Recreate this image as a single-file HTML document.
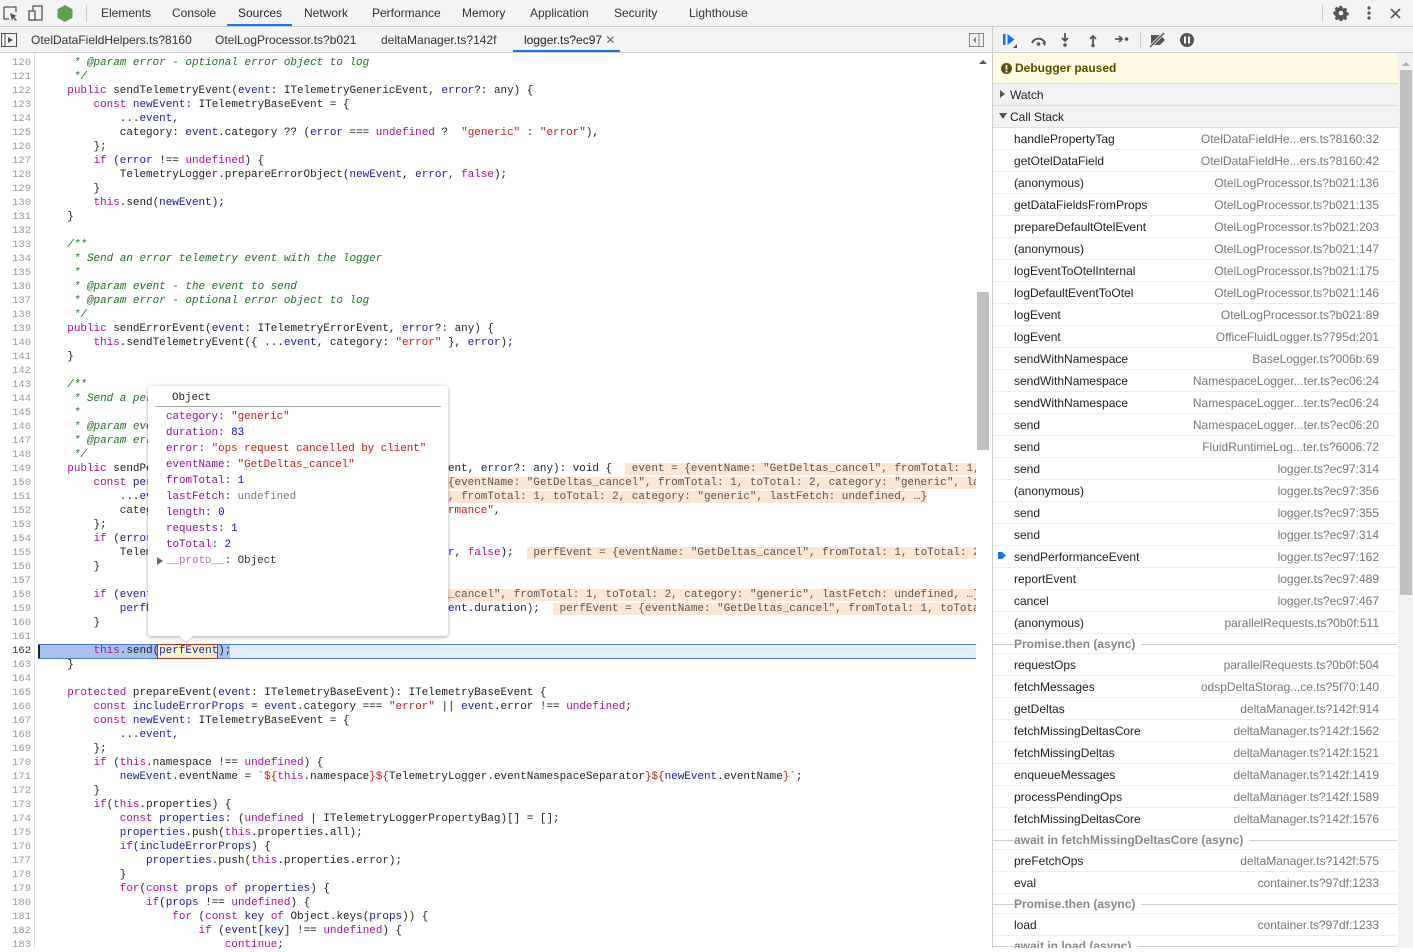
<!DOCTYPE html>
<html><head><meta charset="utf-8"><style>
*{box-sizing:border-box;margin:0;padding:0}
body{width:1413px;height:948px;overflow:hidden;background:#fff;font-family:"Liberation Sans",sans-serif;font-size:12px;color:#333;position:relative}
.abs{position:absolute}
#top{left:0;top:0;width:1413px;height:27px;background:#f3f3f3;border-bottom:1px solid #ccc}
.tab{position:absolute;top:6px;color:#333;font-size:12px}
#ftabs{left:0;top:27px;width:992px;height:26px;background:#f3f3f3;border-bottom:1px solid #ccc}
.ft{position:absolute;top:6px;font-size:12px;color:#333}
#gut{left:0;top:53px;width:35px;height:895px;background:#fff;border-right:1px solid #ddd}
.ln{position:absolute;left:0;width:31px;text-align:right;font-family:"Liberation Mono",monospace;font-size:10.5px;color:#999;line-height:14px}
.cl{position:absolute;left:41px;white-space:pre;font-family:"Liberation Mono",monospace;font-size:10.95px;line-height:14px;color:#222}
.k{color:#aa0d91}.s{color:#c41a16}.c{color:#236e25;font-style:italic}.v{color:#1a1aa6}.n{color:#1c00cf}.u{color:#777}
.iv{background:#fde6d2;color:#555}
#tip{left:148px;top:386px;width:300px;height:250px;background:#fff;border-radius:3px;box-shadow:0 1px 4px rgba(0,0,0,.35);font-family:"Liberation Mono",monospace;font-size:10.85px;line-height:16px}
.tp{position:absolute;left:18px;white-space:pre}
.pk{color:#881391}
#rp{left:992px;top:27px;width:421px;height:921px;background:#fff;border-left:1px solid #ccc}
.row{position:absolute;left:0;width:404px;height:22px;border-bottom:1px solid #eee;background:#fff}
.row .a{position:absolute;left:21px;top:4px;color:#222}
.row .b{position:absolute;right:18px;top:4px;color:#777}
.sep{position:absolute;left:0;width:404px;height:20px;background:#fff;border-bottom:1px solid #eee}
.sep span{position:absolute;left:21px;top:3px;color:#888;font-weight:bold;background:#fff;padding:0 6px 0 0}
.sep:before{content:"";position:absolute;left:0;right:0;top:10px;border-top:1px solid #ccc}
</style></head><body>
<div id="top" class="abs">
<svg class="abs" style="left:3px;top:6px" width="16" height="16"><path d="M1 1h12v5M1 1v12h5" fill="none" stroke="#555" stroke-width="1.3"/><path d="M7 7l7 3-3 1 3 3-1 1-3-3-1 3z" fill="#555"/></svg>
<svg class="abs" style="left:28px;top:5px" width="16" height="18"><rect x="5" y="1" width="9" height="14" fill="none" stroke="#555" stroke-width="1.3"/><rect x="1" y="6" width="6" height="9" fill="#f3f3f3" stroke="#555" stroke-width="1.3"/></svg>
<svg class="abs" style="left:57px;top:5px" width="16" height="17"><path d="M8 0l7.5 4.2v8.6L8 17 .5 12.8V4.2z" fill="#5fa04e"/></svg>
<div class="abs" style="left:86px;top:5px;width:1px;height:17px;background:#ccc"></div>
<span class="tab" style="left:101px">Elements</span>
<span class="tab" style="left:172px">Console</span>
<span class="tab" style="left:238px;color:#222">Sources</span>
<div class="abs" style="left:227px;top:24px;width:65px;height:2px;background:#1a73e8"></div>
<span class="tab" style="left:304px">Network</span>
<span class="tab" style="left:372px">Performance</span>
<span class="tab" style="left:462px">Memory</span>
<span class="tab" style="left:530px">Application</span>
<span class="tab" style="left:614px">Security</span>
<span class="tab" style="left:689px">Lighthouse</span>
<div class="abs" style="left:1322px;top:5px;width:1px;height:17px;background:#ccc"></div>
<svg class="abs" style="left:1333px;top:5px" width="16" height="16" viewBox="0 0 16 16"><path d="M8 1l1.3.2.4 1.8 1.2.6 1.6-1 1.8 1.8-1 1.6.6 1.2 1.8.4v2.6l-1.8.4-.6 1.2 1 1.6-1.8 1.8-1.6-1-1.2.6-.4 1.8H6.7l-.4-1.8-1.2-.6-1.6 1-1.8-1.8 1-1.6-.6-1.2L.3 9.3V6.7l1.8-.4.6-1.2-1-1.6 1.8-1.8 1.6 1 1.2-.6.4-1.8z" fill="#555"/><circle cx="8" cy="8" r="2.3" fill="#f3f3f3"/></svg>
<svg class="abs" style="left:1366px;top:5px" width="6" height="16"><circle cx="3" cy="3" r="1.6" fill="#555"/><circle cx="3" cy="8" r="1.6" fill="#555"/><circle cx="3" cy="13" r="1.6" fill="#555"/></svg>
<svg class="abs" style="left:1390px;top:8px" width="11" height="11"><path d="M1 1l9 9M10 1l-9 9" stroke="#555" stroke-width="1.6"/></svg>
</div>
<div id="ftabs" class="abs">
<svg class="abs" style="left:1px;top:6px" width="16" height="14"><rect x=".5" y=".5" width="15" height="13" fill="none" stroke="#555"/><path d="M4 1v12" stroke="#555"/><path d="M7 4l5 3-5 3z" fill="#555"/></svg>
<span class="ft" style="left:31px">OtelDataFieldHelpers.ts?8160</span>
<span class="ft" style="left:215px">OtelLogProcessor.ts?b021</span>
<span class="ft" style="left:381px">deltaManager.ts?142f</span>
<span class="ft" style="left:524px;color:#222">logger.ts?ec97 <span style="color:#666">✕</span></span>
<div class="abs" style="left:513px;top:23px;width:107px;height:2px;background:#1a73e8"></div>
<svg class="abs" style="left:969px;top:6px" width="15" height="14"><rect x=".5" y=".5" width="14" height="13" fill="none" stroke="#888"/><path d="M10 1v12" stroke="#888"/><path d="M7 4l-3 3 3 3z" fill="#888"/></svg>
</div>

<div id="gut" class="abs"></div>
<div class="abs" style="left:38px;top:644px;width:938px;height:15px;background:#e6edfc;border-top:1px solid #4e7ce6;border-bottom:1px solid #4e7ce6"></div>
<div class="abs" style="left:38px;top:645px;width:192px;height:13px;background:#a9c0f3"></div>
<div class="abs" style="left:38px;top:645px;width:2px;height:13px;background:#222"></div>
<div class="abs" style="left:157px;top:644px;width:61px;height:15px;background:#fdf6c8;border:1px solid #b03030"></div>

<div class="abs" style="left:0;top:56px">
<div class="ln" style="top:0">120</div><div class="ln" style="top:14px">121</div><div class="ln" style="top:28px">122</div><div class="ln" style="top:42px">123</div><div class="ln" style="top:56px">124</div><div class="ln" style="top:70px">125</div><div class="ln" style="top:84px">126</div><div class="ln" style="top:98px">127</div><div class="ln" style="top:112px">128</div><div class="ln" style="top:126px">129</div><div class="ln" style="top:140px">130</div><div class="ln" style="top:154px">131</div><div class="ln" style="top:168px">132</div><div class="ln" style="top:182px">133</div><div class="ln" style="top:196px">134</div><div class="ln" style="top:210px">135</div><div class="ln" style="top:224px">136</div><div class="ln" style="top:238px">137</div><div class="ln" style="top:252px">138</div><div class="ln" style="top:266px">139</div><div class="ln" style="top:280px">140</div><div class="ln" style="top:294px">141</div><div class="ln" style="top:308px">142</div><div class="ln" style="top:322px">143</div><div class="ln" style="top:336px">144</div><div class="ln" style="top:350px">145</div><div class="ln" style="top:364px">146</div><div class="ln" style="top:378px">147</div><div class="ln" style="top:392px">148</div><div class="ln" style="top:406px">149</div><div class="ln" style="top:420px">150</div><div class="ln" style="top:434px">151</div><div class="ln" style="top:448px">152</div><div class="ln" style="top:462px">153</div><div class="ln" style="top:476px">154</div><div class="ln" style="top:490px">155</div><div class="ln" style="top:504px">156</div><div class="ln" style="top:518px">157</div><div class="ln" style="top:532px">158</div><div class="ln" style="top:546px">159</div><div class="ln" style="top:560px">160</div><div class="ln" style="top:574px">161</div><div class="ln" style="top:588px;color:#333">162</div><div class="ln" style="top:602px">163</div><div class="ln" style="top:616px">164</div><div class="ln" style="top:630px">165</div><div class="ln" style="top:644px">166</div><div class="ln" style="top:658px">167</div><div class="ln" style="top:672px">168</div><div class="ln" style="top:686px">169</div><div class="ln" style="top:700px">170</div><div class="ln" style="top:714px">171</div><div class="ln" style="top:728px">172</div><div class="ln" style="top:742px">173</div><div class="ln" style="top:756px">174</div><div class="ln" style="top:770px">175</div><div class="ln" style="top:784px">176</div><div class="ln" style="top:798px">177</div><div class="ln" style="top:812px">178</div><div class="ln" style="top:826px">179</div><div class="ln" style="top:840px">180</div><div class="ln" style="top:854px">181</div><div class="ln" style="top:868px">182</div><div class="ln" style="top:882px">183</div>

<div class="cl" style="top:0"><span class="c">     * @param error - optional error object to log</span></div>
<div class="cl" style="top:14px"><span class="c">     */</span></div>
<div class="cl" style="top:28px">    <span class="k">public</span> sendTelemetryEvent(<span class="v">event</span>: ITelemetryGenericEvent, <span class="v">error</span>?: any) {</div>
<div class="cl" style="top:42px">        <span class="k">const</span> <span class="v">newEvent</span>: ITelemetryBaseEvent = {</div>
<div class="cl" style="top:56px">            ...<span class="v">event</span>,</div>
<div class="cl" style="top:70px">            category: <span class="v">event</span>.category ?? (<span class="v">error</span> === <span class="k">undefined</span> ?  <span class="s">"generic"</span> : <span class="s">"error"</span>),</div>
<div class="cl" style="top:84px">        };</div>
<div class="cl" style="top:98px">        <span class="k">if</span> (<span class="v">error</span> !== <span class="k">undefined</span>) {</div>
<div class="cl" style="top:112px">            TelemetryLogger.prepareErrorObject(<span class="v">newEvent</span>, <span class="v">error</span>, <span class="k">false</span>);</div>
<div class="cl" style="top:126px">        }</div>
<div class="cl" style="top:140px">        <span class="k">this</span>.send(<span class="v">newEvent</span>);</div>
<div class="cl" style="top:154px">    }</div>
<div class="cl" style="top:182px"><span class="c">    /**</span></div>
<div class="cl" style="top:196px"><span class="c">     * Send an error telemetry event with the logger</span></div>
<div class="cl" style="top:210px"><span class="c">     *</span></div>
<div class="cl" style="top:224px"><span class="c">     * @param event - the event to send</span></div>
<div class="cl" style="top:238px"><span class="c">     * @param error - optional error object to log</span></div>
<div class="cl" style="top:252px"><span class="c">     */</span></div>
<div class="cl" style="top:266px">    <span class="k">public</span> sendErrorEvent(<span class="v">event</span>: ITelemetryErrorEvent, <span class="v">error</span>?: any) {</div>
<div class="cl" style="top:280px">        <span class="k">this</span>.sendTelemetryEvent({ ...<span class="v">event</span>, category: <span class="s">"error"</span> }, <span class="v">error</span>);</div>
<div class="cl" style="top:294px">    }</div>
<div class="cl" style="top:322px"><span class="c">    /**</span></div>
<div class="cl" style="top:336px"><span class="c">     * Send a performance telemetry event with the logger</span></div>
<div class="cl" style="top:350px"><span class="c">     *</span></div>
<div class="cl" style="top:364px"><span class="c">     * @param event - Event to send</span></div>
<div class="cl" style="top:378px"><span class="c">     * @param error - optional error object to log</span></div>
<div class="cl" style="top:392px"><span class="c">     */</span></div>
<div class="cl" style="top:406px">    <span class="k">public</span> sendPerformanceEvent(<span class="v">event</span>: ITelemetryPerformanceEvent, <span class="v">error</span>?: any): void {  <span class="iv"> event = {eventName: "GetDeltas_cancel", fromTotal: 1, toTotal: 2, category: "generic", lastFetch: undefined, …}</span></div>
<div class="cl" style="top:420px">        <span class="k">const</span> <span class="v">perfEvent</span>: ITelemetryBaseEvent = {  <span class="iv">perfEvent = {eventName: "GetDeltas_cancel", fromTotal: 1, toTotal: 2, category: "generic", lastFetch: undefined, …}</span></div>
<div class="cl" style="top:434px">            ...<span class="v">event</span>,   <span class="iv">event = {eventName: "GetDeltas_cancel", fromTotal: 1, toTotal: 2, category: "generic", lastFetch: undefined, …}</span></div>
<div class="cl" style="top:448px">            category: <span class="v">event</span>.category ? <span class="v">event</span>.category : <span class="s">"performance"</span>,</div>
<div class="cl" style="top:462px">        };</div>
<div class="cl" style="top:476px">        <span class="k">if</span> (<span class="v">error</span> !== <span class="k">undefined</span>) {</div>
<div class="cl" style="top:490px">            TelemetryLogger.prepareErrorObject(<span class="v">perfEvent</span>, <span class="v">error</span>, <span class="k">false</span>);  <span class="iv"> perfEvent = {eventName: "GetDeltas_cancel", fromTotal: 1, toTotal: 2, category: "generic", …}</span></div>
<div class="cl" style="top:504px">        }</div>
<div class="cl" style="top:532px">        <span class="k">if</span> (<span class="v">event</span>.duration) {   <span class="iv">event = {eventName: "GetDeltas_cancel", fromTotal: 1, toTotal: 2, category: "generic", lastFetch: undefined, …}</span></div>
<div class="cl" style="top:546px">            <span class="v">perfEvent</span>.duration = TelemetryLogger.formatTick(<span class="v">event</span>.duration);  <span class="iv"> perfEvent = {eventName: "GetDeltas_cancel", fromTotal: 1, toTotal: 2, category: "generic", …}</span></div>
<div class="cl" style="top:560px">        }</div>
<div class="cl" style="top:588px">        <span class="k">this</span>.send(<span class="v">perfEvent</span>);</div>
<div class="cl" style="top:602px">    }</div>
<div class="cl" style="top:630px">    <span class="k">protected</span> prepareEvent(<span class="v">event</span>: ITelemetryBaseEvent): ITelemetryBaseEvent {</div>
<div class="cl" style="top:644px">        <span class="k">const</span> <span class="v">includeErrorProps</span> = <span class="v">event</span>.category === <span class="s">"error"</span> || <span class="v">event</span>.error !== <span class="k">undefined</span>;</div>
<div class="cl" style="top:658px">        <span class="k">const</span> <span class="v">newEvent</span>: ITelemetryBaseEvent = {</div>
<div class="cl" style="top:672px">            ...<span class="v">event</span>,</div>
<div class="cl" style="top:686px">        };</div>
<div class="cl" style="top:700px">        <span class="k">if</span> (<span class="k">this</span>.namespace !== <span class="k">undefined</span>) {</div>
<div class="cl" style="top:714px">            <span class="v">newEvent</span>.eventName = <span class="s">`${</span><span class="k">this</span>.namespace<span class="s">}${</span>TelemetryLogger.eventNamespaceSeparator<span class="s">}${</span><span class="v">newEvent</span>.eventName<span class="s">}`</span>;</div>
<div class="cl" style="top:728px">        }</div>
<div class="cl" style="top:742px">        <span class="k">if</span>(<span class="k">this</span>.properties) {</div>
<div class="cl" style="top:756px">            <span class="k">const</span> <span class="v">properties</span>: (<span class="k">undefined</span> | ITelemetryLoggerPropertyBag)[] = [];</div>
<div class="cl" style="top:770px">            <span class="v">properties</span>.push(<span class="k">this</span>.properties.all);</div>
<div class="cl" style="top:784px">            <span class="k">if</span>(<span class="v">includeErrorProps</span>) {</div>
<div class="cl" style="top:798px">                <span class="v">properties</span>.push(<span class="k">this</span>.properties.error);</div>
<div class="cl" style="top:812px">            }</div>
<div class="cl" style="top:826px">            <span class="k">for</span>(<span class="k">const</span> <span class="v">props</span> <span class="k">of</span> <span class="v">properties</span>) {</div>
<div class="cl" style="top:840px">                <span class="k">if</span>(<span class="v">props</span> !== <span class="k">undefined</span>) {</div>
<div class="cl" style="top:854px">                    <span class="k">for</span> (<span class="k">const</span> <span class="v">key</span> <span class="k">of</span> Object.keys(<span class="v">props</span>)) {</div>
<div class="cl" style="top:868px">                        <span class="k">if</span> (<span class="v">event</span>[<span class="v">key</span>] !== <span class="k">undefined</span>) {</div>
<div class="cl" style="top:882px">                            <span class="k">continue</span>;</div>
</div>

<div class="abs" style="left:976px;top:53px;width:16px;height:895px;background:#fff"></div>
<div class="abs" style="left:977px;top:292px;width:12px;height:158px;background:#c1c1c1"></div>
<svg class="abs" style="left:979px;top:59px" width="8" height="6"><path d="M0 5l4-4 4 4z" fill="#555"/></svg>

<div id="tip" class="abs">
<div class="tp" style="left:24px;top:4px;color:#222">Object</div>
<div class="abs" style="left:7px;top:20px;width:286px;height:1px;background:#aaa"></div>
<div class="tp" style="top:23px"><span class="pk">category</span>: <span class="s">"generic"</span></div>
<div class="tp" style="top:39px"><span class="pk">duration</span>: <span class="n">83</span></div>
<div class="tp" style="top:55px"><span class="pk">error</span>: <span class="s">"ops request cancelled by client"</span></div>
<div class="tp" style="top:71px"><span class="pk">eventName</span>: <span class="s">"GetDeltas_cancel"</span></div>
<div class="tp" style="top:87px"><span class="pk">fromTotal</span>: <span class="n">1</span></div>
<div class="tp" style="top:103px"><span class="pk">lastFetch</span>: <span class="u">undefined</span></div>
<div class="tp" style="top:119px"><span class="pk">length</span>: <span class="n">0</span></div>
<div class="tp" style="top:135px"><span class="pk">requests</span>: <span class="n">1</span></div>
<div class="tp" style="top:151px"><span class="pk">toTotal</span>: <span class="n">2</span></div>
<svg class="abs" style="left:9px;top:171px" width="6" height="8"><path d="M0 0l6 4-6 4z" fill="#666"/></svg>
<div class="tp" style="top:167px"><span class="pk" style="color:#b070c0">__proto__</span>: Object</div>
</div>
<svg class="abs" style="left:178px;top:635px" width="16" height="9"><path d="M0 0l8 8 8-8" fill="#fff" stroke="#ddd"/><path d="M1 0h14" stroke="#fff" stroke-width="2"/></svg>

<div id="rp" class="abs">
<div class="abs" style="left:0;top:0;width:421px;height:26px;background:#f3f3f3;border-bottom:1px solid #ccc"></div>
<svg class="abs" style="left:9px;top:6px" width="18" height="16"><rect x="1" y="1" width="2.5" height="11" fill="#1a73e8"/><path d="M5.5 1l7 5.5-7 5.5z" fill="#1a73e8"/><path d="M15 11v4h-4z" fill="#555"/></svg>
<svg class="abs" style="left:37px;top:6px" width="18" height="14"><path d="M2 10a7 7 0 0 1 13 0" fill="none" stroke="#555" stroke-width="2"/><path d="M12 10l4-1-1 4z" fill="#555"/><circle cx="8.5" cy="11" r="1.8" fill="#555"/></svg>
<svg class="abs" style="left:67px;top:5px" width="10" height="16"><path d="M5 1v8M2 6l3 3 3-3" fill="none" stroke="#555" stroke-width="1.8"/><circle cx="5" cy="13" r="1.8" fill="#555"/></svg>
<svg class="abs" style="left:95px;top:5px" width="10" height="16"><path d="M5 12V4M2 7l3-3 3 3" fill="none" stroke="#555" stroke-width="1.8"/><circle cx="5" cy="13.5" r="1.8" fill="#555"/></svg>
<svg class="abs" style="left:121px;top:7px" width="16" height="10"><path d="M1 5h7M5 2l3 3-3 3" fill="none" stroke="#555" stroke-width="1.8"/><circle cx="12.5" cy="5" r="1.8" fill="#555"/></svg>
<div class="abs" style="left:147px;top:5px;width:1px;height:16px;background:#ccc"></div>
<svg class="abs" style="left:155px;top:5px" width="20" height="16"><path d="M3 3h9l5 5-5 5H3z" fill="#555"/><path d="M2 15L16 1" stroke="#f3f3f3" stroke-width="3"/><path d="M2 15L16 1" stroke="#555" stroke-width="1.5"/></svg>
<svg class="abs" style="left:186px;top:5px" width="16" height="16"><circle cx="8" cy="8" r="7" fill="#555"/><rect x="5" y="4.5" width="2" height="7" fill="#f3f3f3"/><rect x="9" y="4.5" width="2" height="7" fill="#f3f3f3"/></svg>

<div class="abs" style="left:0;top:26px;width:405px;height:31px;background:#fffbe0;border-bottom:1px solid #e3dcb0"></div>
<svg class="abs" style="left:8px;top:36px" width="11" height="11"><circle cx="5.5" cy="5.5" r="5.5" fill="#5a4f0a"/><rect x="4.6" y="2" width="1.8" height="4.5" fill="#fffbe0"/><rect x="4.6" y="7.5" width="1.8" height="1.8" fill="#fffbe0"/></svg>
<div class="abs" style="left:22px;top:34px;font-weight:bold;color:#5c4d00;font-size:12px">Debugger paused</div>

<div class="abs" style="left:0;top:57px;width:405px;height:22px;background:#f3f3f3;border-bottom:1px solid #ddd"></div>
<svg class="abs" style="left:7px;top:63px" width="6" height="8"><path d="M0 0l5 4-5 4z" fill="#555"/></svg>
<div class="abs" style="left:17px;top:61px;color:#222">Watch</div>
<div class="abs" style="left:0;top:79px;width:405px;height:22px;background:#f3f3f3;border-bottom:1px solid #ddd"></div>
<svg class="abs" style="left:6px;top:86px" width="8" height="6"><path d="M0 0h8l-4 6z" fill="#555"/></svg>
<div class="abs" style="left:17px;top:83px;color:#222">Call Stack</div>

<div class="abs" style="left:0;top:101px;width:405px;height:820px;overflow:hidden">
<div class="row" style="top:0"><span class="a">handlePropertyTag</span><span class="b">OtelDataFieldHe...ers.ts?8160:32</span></div>
<div class="row" style="top:22px"><span class="a">getOtelDataField</span><span class="b">OtelDataFieldHe...ers.ts?8160:42</span></div>
<div class="row" style="top:44px"><span class="a">(anonymous)</span><span class="b">OtelLogProcessor.ts?b021:136</span></div>
<div class="row" style="top:66px"><span class="a">getDataFieldsFromProps</span><span class="b">OtelLogProcessor.ts?b021:135</span></div>
<div class="row" style="top:88px"><span class="a">prepareDefaultOtelEvent</span><span class="b">OtelLogProcessor.ts?b021:203</span></div>
<div class="row" style="top:110px"><span class="a">(anonymous)</span><span class="b">OtelLogProcessor.ts?b021:147</span></div>
<div class="row" style="top:132px"><span class="a">logEventToOtelInternal</span><span class="b">OtelLogProcessor.ts?b021:175</span></div>
<div class="row" style="top:154px"><span class="a">logDefaultEventToOtel</span><span class="b">OtelLogProcessor.ts?b021:146</span></div>
<div class="row" style="top:176px"><span class="a">logEvent</span><span class="b">OtelLogProcessor.ts?b021:89</span></div>
<div class="row" style="top:198px"><span class="a">logEvent</span><span class="b">OfficeFluidLogger.ts?795d:201</span></div>
<div class="row" style="top:220px"><span class="a">sendWithNamespace</span><span class="b">BaseLogger.ts?006b:69</span></div>
<div class="row" style="top:242px"><span class="a">sendWithNamespace</span><span class="b">NamespaceLogger...ter.ts?ec06:24</span></div>
<div class="row" style="top:264px"><span class="a">sendWithNamespace</span><span class="b">NamespaceLogger...ter.ts?ec06:24</span></div>
<div class="row" style="top:286px"><span class="a">send</span><span class="b">NamespaceLogger...ter.ts?ec06:20</span></div>
<div class="row" style="top:308px"><span class="a">send</span><span class="b">FluidRuntimeLog...ter.ts?6006:72</span></div>
<div class="row" style="top:330px"><span class="a">send</span><span class="b">logger.ts?ec97:314</span></div>
<div class="row" style="top:352px"><span class="a">(anonymous)</span><span class="b">logger.ts?ec97:356</span></div>
<div class="row" style="top:374px"><span class="a">send</span><span class="b">logger.ts?ec97:355</span></div>
<div class="row" style="top:396px"><span class="a">send</span><span class="b">logger.ts?ec97:314</span></div>
<div class="row" style="top:418px"><svg class="abs" style="left:5px;top:5px" width="8" height="9"><path d="M0 1h4l4 3.5L4 8H0z" fill="#1a73e8"/></svg><span class="a">sendPerformanceEvent</span><span class="b">logger.ts?ec97:162</span></div>
<div class="row" style="top:440px"><span class="a">reportEvent</span><span class="b">logger.ts?ec97:489</span></div>
<div class="row" style="top:462px"><span class="a">cancel</span><span class="b">logger.ts?ec97:467</span></div>
<div class="row" style="top:484px"><span class="a">(anonymous)</span><span class="b">parallelRequests.ts?0b0f:511</span></div>
<div class="sep" style="top:506px"><span>Promise.then (async)</span></div>
<div class="row" style="top:526px"><span class="a">requestOps</span><span class="b">parallelRequests.ts?0b0f:504</span></div>
<div class="row" style="top:548px"><span class="a">fetchMessages</span><span class="b">odspDeltaStorag...ce.ts?5f70:140</span></div>
<div class="row" style="top:570px"><span class="a">getDeltas</span><span class="b">deltaManager.ts?142f:914</span></div>
<div class="row" style="top:592px"><span class="a">fetchMissingDeltasCore</span><span class="b">deltaManager.ts?142f:1562</span></div>
<div class="row" style="top:614px"><span class="a">fetchMissingDeltas</span><span class="b">deltaManager.ts?142f:1521</span></div>
<div class="row" style="top:636px"><span class="a">enqueueMessages</span><span class="b">deltaManager.ts?142f:1419</span></div>
<div class="row" style="top:658px"><span class="a">processPendingOps</span><span class="b">deltaManager.ts?142f:1589</span></div>
<div class="row" style="top:680px"><span class="a">fetchMissingDeltasCore</span><span class="b">deltaManager.ts?142f:1576</span></div>
<div class="sep" style="top:702px"><span>await in fetchMissingDeltasCore (async)</span></div>
<div class="row" style="top:722px"><span class="a">preFetchOps</span><span class="b">deltaManager.ts?142f:575</span></div>
<div class="row" style="top:744px"><span class="a">eval</span><span class="b">container.ts?97df:1233</span></div>
<div class="sep" style="top:766px"><span>Promise.then (async)</span></div>
<div class="row" style="top:786px"><span class="a">load</span><span class="b">container.ts?97df:1233</span></div>
<div class="sep" style="top:808px"><span>await in load (async)</span></div>
</div>

<div class="abs" style="left:405px;top:26px;width:16px;height:895px;background:#f1f1f1"></div>
<svg class="abs" style="left:409px;top:34px" width="8" height="6"><path d="M0 5l4-4 4 4z" fill="#aaa"/></svg>
<div class="abs" style="left:407px;top:43px;width:12px;height:525px;background:#c1c1c1"></div>
</div>
</body></html>
